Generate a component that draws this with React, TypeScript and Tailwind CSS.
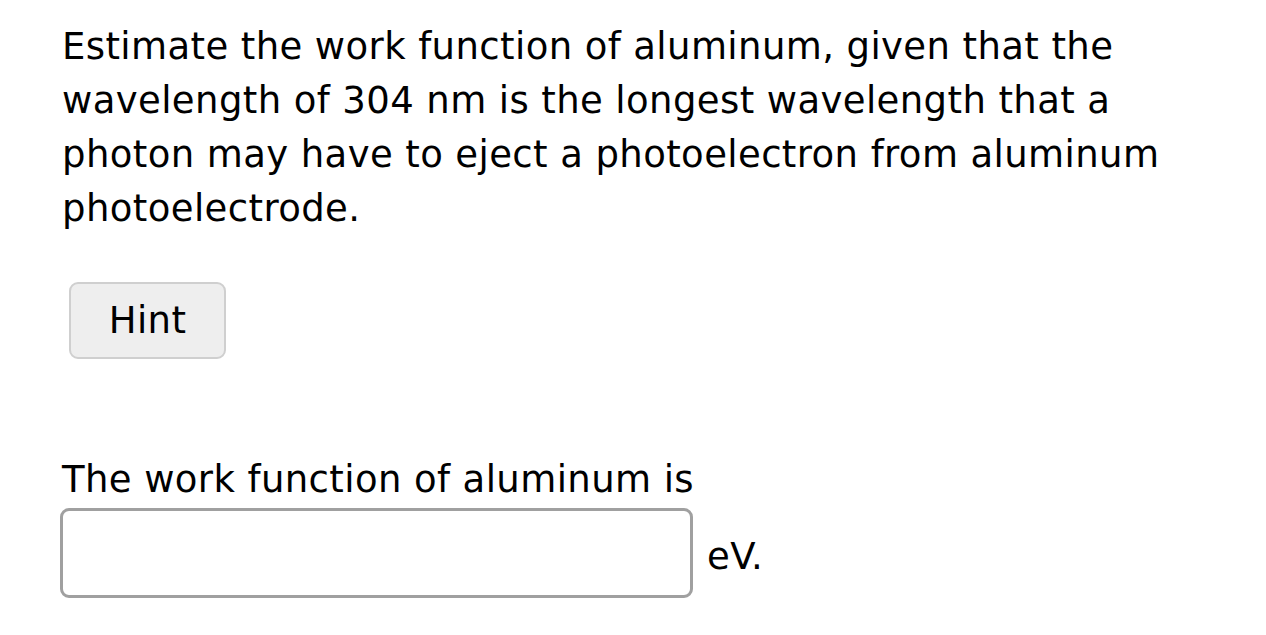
export default function App() {
  return (
    <div className="min-h-screen bg-white px-[62px] pt-[20px] text-black">
      <div className="font-['DejaVu_Sans',sans-serif] text-[37px] leading-[54px] tracking-[0.4px] max-w-[1140px]">
        <p>
          Estimate the work function of aluminum, given that the wavelength of
          304 nm is the longest wavelength that a photon may have to eject a
          photoelectron from aluminum photoelectrode.
        </p>

        <button className="mt-[46px] ml-[7px] h-[77px] w-[157px] rounded-[9px] border-2 border-[#cfcfcf] bg-[#eeeeee] text-[37px] leading-none">
          Hint
        </button>

        <p className="mt-[94px]">The work function of aluminum is</p>

        <div className="mt-[1px] -ml-[2px] flex items-center gap-[14px]">
          <input
            type="text"
            className="h-[90px] w-[633px] rounded-[9px] border-[3px] border-[#a0a0a0] bg-white outline-none"
          />
          <span className="pt-[8px]">eV.</span>
        </div>
      </div>
    </div>
  );
}
